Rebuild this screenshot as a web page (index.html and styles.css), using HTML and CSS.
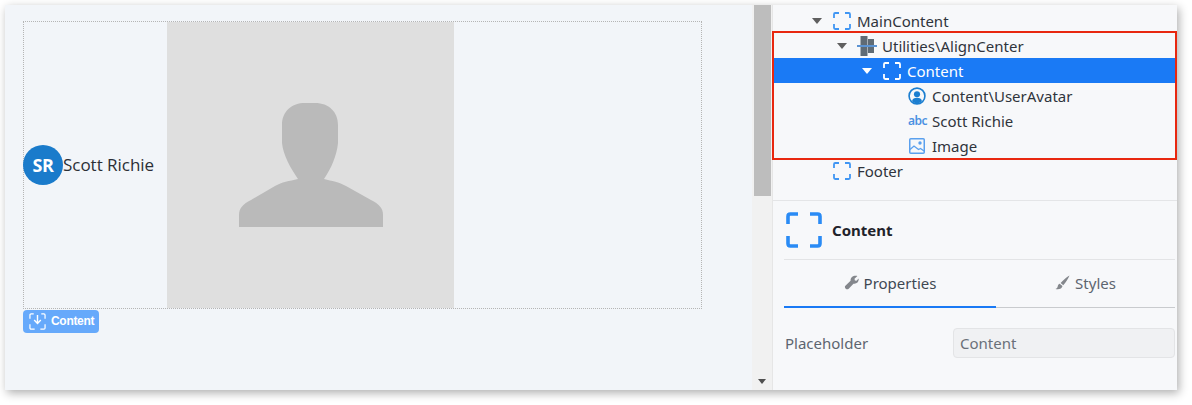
FILE: index.html
```html
<!DOCTYPE html>
<html lang="en">
<head>
<meta charset="utf-8">
<title>Content</title>
<link rel="stylesheet" href="styles.css">
</head>
<body>
<svg class="defs" width="0" height="0" aria-hidden="true">
  <symbol id="brackets" viewBox="0 0 18 18">
    <path d="M1 6V2.200C1 1.500 1.500 1 2.200 1H6M12 1h3.800c.7 0 1.200.5 1.200 1.200V6M17 12v3.800c0 .7-.5 1.200-1.200 1.200H12M6 17H2.200C1.500 17 1 16.500 1 15.800V12" fill="none" stroke="currentColor" stroke-width="1.800"/>
  </symbol>
</svg>
<main class="window">
  <section class="canvas">
    <div class="frame">
      <div class="user">
        <span class="avatar">SR</span>
        <span class="user-name">Scott Richie</span>
      </div>
      <div class="placeholder-image">
        <svg class="silhouette" viewBox="0 0 144 125" width="144" height="125" aria-hidden="true">
          <path d="M0 124V112C0 105 4 101 12 97L36 83C43 79 50 78 59 76C52 66 44 52 43 40V22C43 8 53 0 66 0H76C90 0 99 9 99 22V40C98 52 92 66 85 76C93 78 100 79 107 83L132 97C140 101 144 105 144 112V124Z" fill="#bababa"/>
        </svg>
      </div>
    </div>
    <div class="tag">
      <svg class="tag-icon" viewBox="0 0 18 18" width="17" height="17" aria-hidden="true">
        <path d="M1 6V2.200C1 1.500 1.500 1 2.200 1H5M13 1h2.800c.7 0 1.200.5 1.200 1.200V6M17 12v3.800c0 .7-.5 1.200-1.200 1.200H12M6 17H2.200C1.500 17 1 16.500 1 15.800V12" fill="none" stroke="#fff" stroke-width="1.300"/>
        <path d="M9 2v8M5.500 7.500 9 11l3.500-3.500" fill="none" stroke="#fff" stroke-width="1.500"/>
      </svg>
      <span>Content</span>
    </div>
  </section>
  <div class="scrollbar">
    <div class="thumb"></div>
    <div class="scroll-arrow"></div>
  </div>
  <aside class="panel">
    <div class="tree">
      <div class="row indent-1"><span class="caret"></span><svg class="node-icon"><use href="#brackets"/></svg><span>MainContent</span></div>
      <div class="row indent-2">
        <span class="caret"></span>
        <svg class="node-icon align-icon" viewBox="0 0 20 20" aria-hidden="true">
          <rect x="3.500" y="0" width="7" height="20" fill="#5f6b75"/><rect x="11" y="3" width="6" height="14" fill="#5f6b75"/><rect x="0" y="9" width="20" height="2" fill="#5b93d3"/>
        </svg>
        <span>Utilities\AlignCenter</span>
      </div>
      <div class="row indent-3 selected"><span class="caret"></span><svg class="node-icon"><use href="#brackets"/></svg><span>Content</span></div>
      <div class="row indent-4">
        <svg class="node-icon" viewBox="0 0 20 20" aria-hidden="true">
          <circle cx="10" cy="10" r="8.800" fill="none" stroke="#1b7ed0" stroke-width="1.800"/>
          <circle cx="10" cy="8" r="3.400" fill="#1b7ed0"/>
          <path d="M4.500 15.500C5 13 7 12 10 12s5 1 5.500 3.500C14 17.500 12 18 10 18s-4-.5-5.500-2.500Z" fill="#1b7ed0"/>
        </svg>
        <span>Content\UserAvatar</span>
      </div>
      <div class="row indent-4"><span class="abc">abc</span><span>Scott Richie</span></div>
      <div class="row indent-4">
        <svg class="node-icon image-icon" viewBox="0 0 16 16" aria-hidden="true">
          <rect x=".75" y=".75" width="14.500" height="14.500" rx="1" fill="none" stroke="#5aa0ee" stroke-width="1.500"/>
          <circle cx="11" cy="5" r="1.700" fill="#5aa0ee"/>
          <path d="M1 11.500 5 8l4.500 3.500 2-1 3.500 2.500" fill="none" stroke="#5aa0ee" stroke-width="1.300"/>
        </svg>
        <span>Image</span>
      </div>
      <div class="row indent-1"><span class="caret-space"></span><svg class="node-icon"><use href="#brackets"/></svg><span>Footer</span></div>
    </div>
    <div class="highlight"></div>
    <div class="details">
      <div class="details-head">
        <svg class="head-icon"><use href="#brackets"/></svg>
        <strong>Content</strong>
      </div>
      <div class="tabs">
        <div class="tab active">
          <svg viewBox="0 0 16 16" width="15" height="15" aria-hidden="true"><path d="M1.500 11.500 7 6.200C6.800 3 9 .8 12.500.8c.7 0 1.300.1 1.800.3L11.200 4.100l.4 1.700 1.700.4 2.300-2.600c.6 3.400-2 6.300-5.500 5.600L5 14.600c-.9.900-2.200.900-3.200 0s-1.200-2.200-.3-3.100Z" fill="#84878c"/></svg>
          <span>Properties</span>
        </div>
        <div class="tab">
          <svg viewBox="0 0 16 16" width="15" height="15" aria-hidden="true"><path d="M15.500.5C14 4 11.500 8 8.800 10.800L6 8.500C8.500 5.500 12 2.500 15.500.5ZM5 9.200l3 2.500c-.3 2.500-3.500 4.300-7.500 3.300 1.800-.7 2.200-2 2.500-3.300.2-1.200.8-2.100 2-2.500Z" fill="#84878c"/></svg>
          <span>Styles</span>
        </div>
      </div>
      <div class="field">
        <label class="field-label" for="placeholder">Placeholder</label>
        <input class="field-input" id="placeholder" value="Content" readonly>
      </div>
    </div>
  </aside>
</main>
</body>
</html>
```

FILE: styles.css
```css
* { box-sizing: border-box; }

html, body { height: 100%; }

body {
  margin: 0;
  background: #fff;
  font-family: "Noto Sans", "Open Sans", sans-serif;
  color: #2b2f36;
  overflow: hidden;
}

.defs { position: absolute; }

.window {
  width: 1172px;
  height: 385px;
  margin: 5px 0 0 5px;
  display: flex;
  background: #f7f8fa;
  box-shadow: 2px 3px 9px rgba(0, 0, 0, .32);
}

.canvas {
  width: 747px;
  flex: none;
  padding: 16px 0 0 18px;
  background: #f2f5f9;
}

.frame {
  width: 679px;
  height: 288px;
  display: flex;
  align-items: stretch;
  border: 1px dotted #b5b5b5;
}

.user {
  width: 143px;
  flex: none;
  display: flex;
  align-items: center;
}

.avatar {
  width: 40px;
  height: 40px;
  margin-left: -1px;
  flex: none;
  border-radius: 50%;
  background: #1a7bcb;
  color: #fff;
  font: 700 18px/40px "Open Sans", sans-serif;
  letter-spacing: -.5px;
  text-align: center;
}

.user-name {
  font: 400 17px/24px "Open Sans", sans-serif;
  letter-spacing: -.03px;
  white-space: nowrap;
}

.placeholder-image {
  width: 287px;
  flex: none;
  display: flex;
  justify-content: center;
  padding-top: 81px;
  background: #dfdfdf;
}

.silhouette { display: block; }

.tag {
  width: 76px;
  height: 23px;
  margin-top: 1px;
  display: flex;
  align-items: center;
  gap: 5px;
  padding-left: 6px;
  border-radius: 4px;
  background: #66a9fb;
  color: #fff;
  font: 700 12px/23px "Liberation Sans", sans-serif;
  letter-spacing: -.3px;
}

.tag-icon { flex: none; }

.scrollbar {
  width: 21px;
  flex: none;
  position: relative;
  padding-left: 2px;
  background: #f1f1f1;
  border-right: 1px solid #e6e6e6;
}

.thumb {
  width: 17px;
  height: 191px;
  background: #bdbdbd;
}

.scroll-arrow {
  position: absolute;
  left: 6px;
  bottom: 6px;
  border: 4.500px solid transparent;
  border-top: 5px solid #505050;
  border-bottom: 0;
}

.panel {
  flex: 1;
  min-width: 0;
  position: relative;
}

.tree {
  height: 196px;
  padding-top: 3px;
  border-bottom: 1px solid #e4e5e7;
}

.row {
  height: 25px;
  padding-top: 1px;
  display: flex;
  align-items: center;
  font-size: 15px;
  line-height: 24px;
  white-space: nowrap;
  color: #2f343c;
}

.indent-1 { padding-left: 39px; }
.indent-2 { padding-left: 64px; }
.indent-3 { padding-left: 89px; }
.indent-4 { padding-left: 135px; }

.caret, .caret-space {
  width: 10px;
  flex: none;
  margin-right: 11px;
}

.caret {
  height: 0;
  border: 5px solid transparent;
  border-top: 6px solid #5f5f5f;
  border-bottom: 0;
}

.node-icon {
  width: 18px;
  height: 18px;
  flex: none;
  margin-right: 6px;
  color: #4096f3;
}

.align-icon {
  width: 20px;
  height: 20px;
  margin-left: -1px;
  margin-right: 5px;
}

.image-icon {
  width: 16px;
  height: 16px;
  margin-left: 1px;
  margin-right: 7px;
}

.abc {
  width: 18px;
  flex: none;
  margin-right: 6px;
  color: #4a90e2;
  font-size: 12px;
  font-weight: 600;
  letter-spacing: -.5px;
}

.row.selected { background: #1a7af5; color: #fff; }
.row.selected .caret { border-top-color: #fff; }
.row.selected .node-icon { color: #fff; }

.highlight {
  position: absolute;
  left: -1px;
  top: 26px;
  width: 405px;
  height: 129px;
  border: 2px solid #e8270f;
  pointer-events: none;
}

.details { padding: 0 2px 0 11px; }

.details-head {
  height: 59px;
  display: flex;
  align-items: center;
  gap: 10px;
  padding-left: 2px;
  border-bottom: 1px solid #e3e4e6;
  font-size: 15px;
  color: #1f232a;
}

.head-icon {
  width: 36px;
  height: 36px;
  color: #2a8bf5;
}

.tabs {
  display: flex;
  height: 48px;
  border-bottom: 1px solid #c9cbce;
}

.tab {
  flex: 1;
  display: flex;
  justify-content: center;
  align-items: center;
  gap: 5px;
  margin-bottom: -1px;
  padding-bottom: 3px;
  font-size: 15px;
  color: #5d6570;
}

.tab.active {
  flex: 0 0 212px;
  padding-bottom: 1px;
  border-bottom: 2px solid #1a7af5;
  color: #3f4853;
}

.field {
  display: flex;
  align-items: center;
  margin-top: 20px;
}

.field-label {
  width: 169px;
  flex: none;
  padding-left: 1px;
  font-size: 15px;
  color: #5d6570;
}

.field-input {
  width: 222px;
  height: 30px;
  padding: 0 6px;
  border: 1px solid #e3e4e6;
  border-radius: 4px;
  background: #f0f1f3;
  font: 15px "Noto Sans", sans-serif;
  color: #6a7079;
  outline: none;
}
```
